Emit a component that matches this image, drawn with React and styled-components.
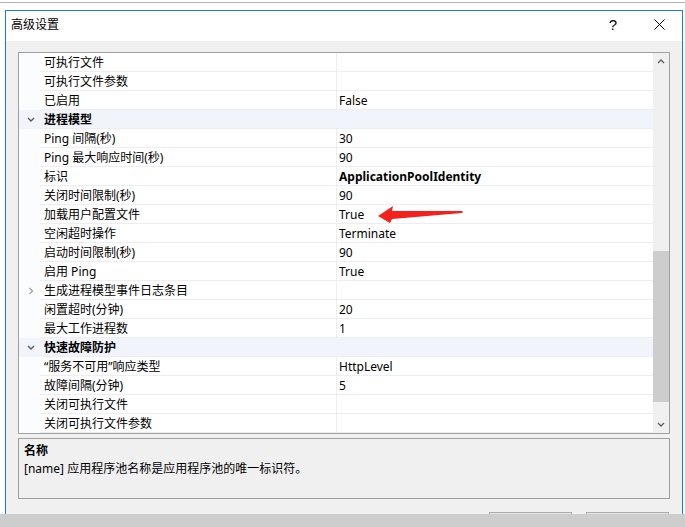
import React from 'react';
import styled, { createGlobalStyle } from 'styled-components';

const GlobalStyle = createGlobalStyle`
  html, body {
    margin: 0;
    padding: 0;
    background: #ffffff;
  }
  body {
    font-family: "Noto Sans", "Noto Sans CJK SC", sans-serif;
    font-size: 12px;
    color: #000;
  }
`;

const Page = styled.div`
  position: relative;
  width: 685px;
  height: 527px;
  overflow: hidden;
  display: flex;
  flex-direction: column;
  background: #ffffff;
`;

const TopRule = styled.div`
  height: 1px;
  margin-top: 2px;
  margin-bottom: 7px;
  background: #b4b4b4;
`;

const Dialog = styled.div`
  width: 676px;
  height: 503px;
  margin-left: 5px;
  border: 1px solid #1c7ad4;
  border-bottom: none;
  display: flex;
  flex-direction: column;
  overflow: hidden;
  background: #f0f0f0;
`;

const TitleBar = styled.div`
  height: 30px;
  flex-shrink: 0;
  display: flex;
  align-items: center;
  background: #ffffff;
`;

const Title = styled.div`
  flex: 1;
  padding-left: 5px;
  padding-bottom: 3px;
  font-size: 12px;
  line-height: 18px;
`;

const TitleButton = styled.div`
  width: 46px;
  height: 30px;
  display: flex;
  align-items: center;
  justify-content: center;
  font-family: "Liberation Sans", sans-serif;
  font-size: 15px;
  padding-bottom: 3px;
  box-sizing: border-box;
`;

const Body = styled.div`
  flex: 1;
  display: flex;
  flex-direction: column;
  padding: 11px 12px 0 12px;
`;

const Grid = styled.div`
  height: 380px;
  border: 1px solid #a0a0a0;
  display: flex;
  background: #ffffff;
`;

const RowList = styled.div`
  flex: 1;
  display: flex;
  flex-direction: column;
`;

const Row = styled.div`
  height: 19px;
  display: flex;
  background: ${p => (p.$category ? '#f1f4fa' : '#ffffff')};
`;

const Gutter = styled.div`
  width: 21px;
  flex-shrink: 0;
  display: flex;
  align-items: center;
  justify-content: center;
  padding-left: 2px;
  box-sizing: border-box;
  background: ${p => (p.$category ? '#f1f4fa' : '#fbfcfe')};
`;

const Cells = styled.div`
  flex: 1;
  height: 18px;
  display: ${p => (p.$span ? 'block' : 'grid')};
  grid-template-columns: 296px 1fr;
  border-bottom: 1px solid #ebeef4;
  overflow: hidden;
`;

const Label = styled.div`
  padding-left: 4px;
  line-height: 20px;
  white-space: nowrap;
  font-weight: ${p => (p.$bold ? 700 : 400)};
`;

const Value = styled.div`
  padding-left: 2px;
  line-height: 20px;
  white-space: nowrap;
  border-left: 1px solid #ebeef4;
  font-weight: ${p => (p.$bold ? 700 : 400)};
`;

const ScrollBar = styled.div`
  width: 16px;
  flex-shrink: 0;
  display: flex;
  flex-direction: column;
  background: #f0f0f0;
`;

const ScrollArrow = styled.div`
  height: 17px;
  display: flex;
  align-items: center;
  justify-content: center;
`;

const ScrollTrack = styled.div`
  flex: 1;
  display: flex;
  flex-direction: column;
  padding-top: ${p => p.$offset}px;
`;

const Thumb = styled.div`
  height: ${p => p.$size}px;
  background: #cdcdcd;
`;

const DescPanel = styled.div`
  height: 56px;
  margin-top: 4px;
  border: 1px solid #a0a0a0;
  padding: 3px 5px 0;
  background: #f0f0f0;
`;

const DescTitle = styled.div`
  font-weight: 700;
  line-height: 18px;
`;

const DescText = styled.div`
  line-height: 18px;
`;

const ButtonRow = styled.div`
  display: flex;
  justify-content: flex-end;
  gap: 14px;
  margin-top: 13px;
  padding-right: 1px;
`;

const Button = styled.div`
  width: 81px;
  height: 21px;
  border: 1px solid #adadad;
  background: #e1e1e1;
`;

const BottomStrip = styled.div`
  flex: 1;
  background: #cdcdcd;
`;

const Arrow = styled.svg`
  position: absolute;
  left: 0;
  top: 0;
  pointer-events: none;
`;

const Chevron = ({ dir, color }) => {
  const paths = {
    down: 'M1 2 L4 5 L7 2',
    up: 'M1 5 L4 2 L7 5',
    right: 'M2.5 1 L5.5 4 L2.5 7',
  };
  return (
    <svg width="8" height="8" viewBox="0 0 8 8">
      <path d={paths[dir]} fill="none" stroke={color} strokeWidth="1.4" />
    </svg>
  );
};

const rows = [
  { label: '可执行文件' },
  { label: '可执行文件参数' },
  { label: '已启用', value: 'False' },
  { category: '进程模型' },
  { label: 'Ping 间隔(秒)', value: '30' },
  { label: 'Ping 最大响应时间(秒)', value: '90' },
  { label: '标识', value: 'ApplicationPoolIdentity', bold: true },
  { label: '关闭时间限制(秒)', value: '90' },
  { label: '加载用户配置文件', value: 'True' },
  { label: '空闲超时操作', value: 'Terminate' },
  { label: '启动时间限制(秒)', value: '90' },
  { label: '启用 Ping', value: 'True' },
  { label: '生成进程模型事件日志条目', collapsed: true },
  { label: '闲置超时(分钟)', value: '20' },
  { label: '最大工作进程数', value: '1' },
  { category: '快速故障防护' },
  { label: '“服务不可用”响应类型', value: 'HttpLevel' },
  { label: '故障间隔(分钟)', value: '5' },
  { label: '关闭可执行文件' },
  { label: '关闭可执行文件参数' },
];

export default function App() {
  return (
    <Page>
      <GlobalStyle />
      <TopRule />
      <Dialog>
        <TitleBar>
          <Title>高级设置</Title>
          <TitleButton>?</TitleButton>
          <TitleButton>
            <svg width="11" height="11" viewBox="0 0 11 11">
              <path d="M0.5 0.5 L10.5 10.5 M10.5 0.5 L0.5 10.5" stroke="#000" strokeWidth="1" />
            </svg>
          </TitleButton>
        </TitleBar>
        <Body>
          <Grid>
            <RowList>
              {rows.map((row, i) =>
                row.category ? (
                  <Row key={i} $category>
                    <Gutter $category>
                      <Chevron dir="down" color="#5a5a5a" />
                    </Gutter>
                    <Cells $span>
                      <Label $bold>{row.category}</Label>
                    </Cells>
                  </Row>
                ) : (
                  <Row key={i}>
                    <Gutter>{row.collapsed && <Chevron dir="right" color="#a6a6a6" />}</Gutter>
                    <Cells>
                      <Label>{row.label}</Label>
                      <Value $bold={row.bold}>{row.value}</Value>
                    </Cells>
                  </Row>
                )
              )}
            </RowList>
            <ScrollBar>
              <ScrollArrow>
                <Chevron dir="up" color="#606060" />
              </ScrollArrow>
              <ScrollTrack $offset={181}>
                <Thumb $size={151} />
              </ScrollTrack>
              <ScrollArrow>
                <Chevron dir="down" color="#606060" />
              </ScrollArrow>
            </ScrollBar>
          </Grid>
          <DescPanel>
            <DescTitle>名称</DescTitle>
            <DescText>[name] 应用程序池名称是应用程序池的唯一标识符。</DescText>
          </DescPanel>
          <ButtonRow>
            <Button />
            <Button />
          </ButtonRow>
        </Body>
      </Dialog>
      <BottomStrip />
      <Arrow width="685" height="527" viewBox="0 0 685 527">
        <polygon
          points="378,216 393,206 392,211 462,211 463,212 462,213 392,219 390,223"
          fill="#f3201b"
        />
      </Arrow>
    </Page>
  );
}
